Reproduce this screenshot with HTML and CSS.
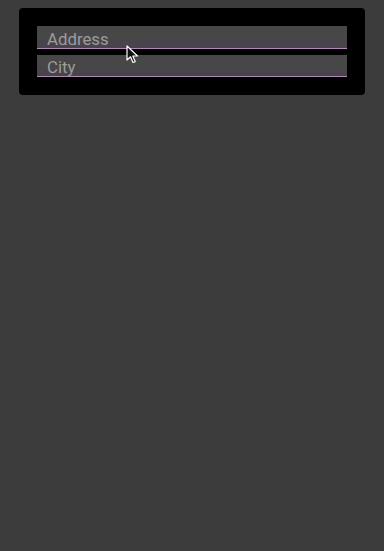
FILE: index.html
```html
<!DOCTYPE html>
<html>
<head>
<meta charset="utf-8">
<link rel="stylesheet" href="styles.css">
</head>
<body>
<div class="card">
  <div class="field"><span class="ph">Address</span></div>
  <div class="field"><span class="ph">City</span></div>
</div>
<svg class="cursor" width="14" height="20" viewBox="0 0 14 20">
  <path d="M1 1 L1 15 L4.5 11.8 L7 17.5 L9.2 16.6 L6.8 11 L11.5 11 Z" fill="#111" stroke="#fff" stroke-width="1.2" stroke-linejoin="round"/>
</svg>
</body>
</html>
```
FILE: styles.css
```css
html, body {
  margin: 0;
  padding: 0;
  background: #3c3c3c;
  height: 100%;
}
body {
  font-family: Roboto, "Liberation Sans", sans-serif;
  padding: 8px 19px 0 19px;
  box-sizing: border-box;
  position: relative;
}
.card {
  width: 346px;
  height: 87px;
  background: #000;
  border-radius: 4px;
  box-sizing: border-box;
  padding: 18px 18px 0 18px;
  display: flex;
  flex-direction: column;
  gap: 6px;
}
.field {
  height: 22.5px;
  background: linear-gradient(to bottom, #474747 0%, #474747 55%, #4a4250 100%);
  border-bottom: 1.5px solid #b08cb5;
  box-sizing: border-box;
  padding-left: 10px;
  display: flex;
  align-items: center;
}
.ph {
  color: #9c9c9c;
  font-size: 16.8px;
  line-height: 22px;
  margin-top: 3.5px;
}
.cursor {
  position: absolute;
  left: 126px;
  top: 45px;
}
```
